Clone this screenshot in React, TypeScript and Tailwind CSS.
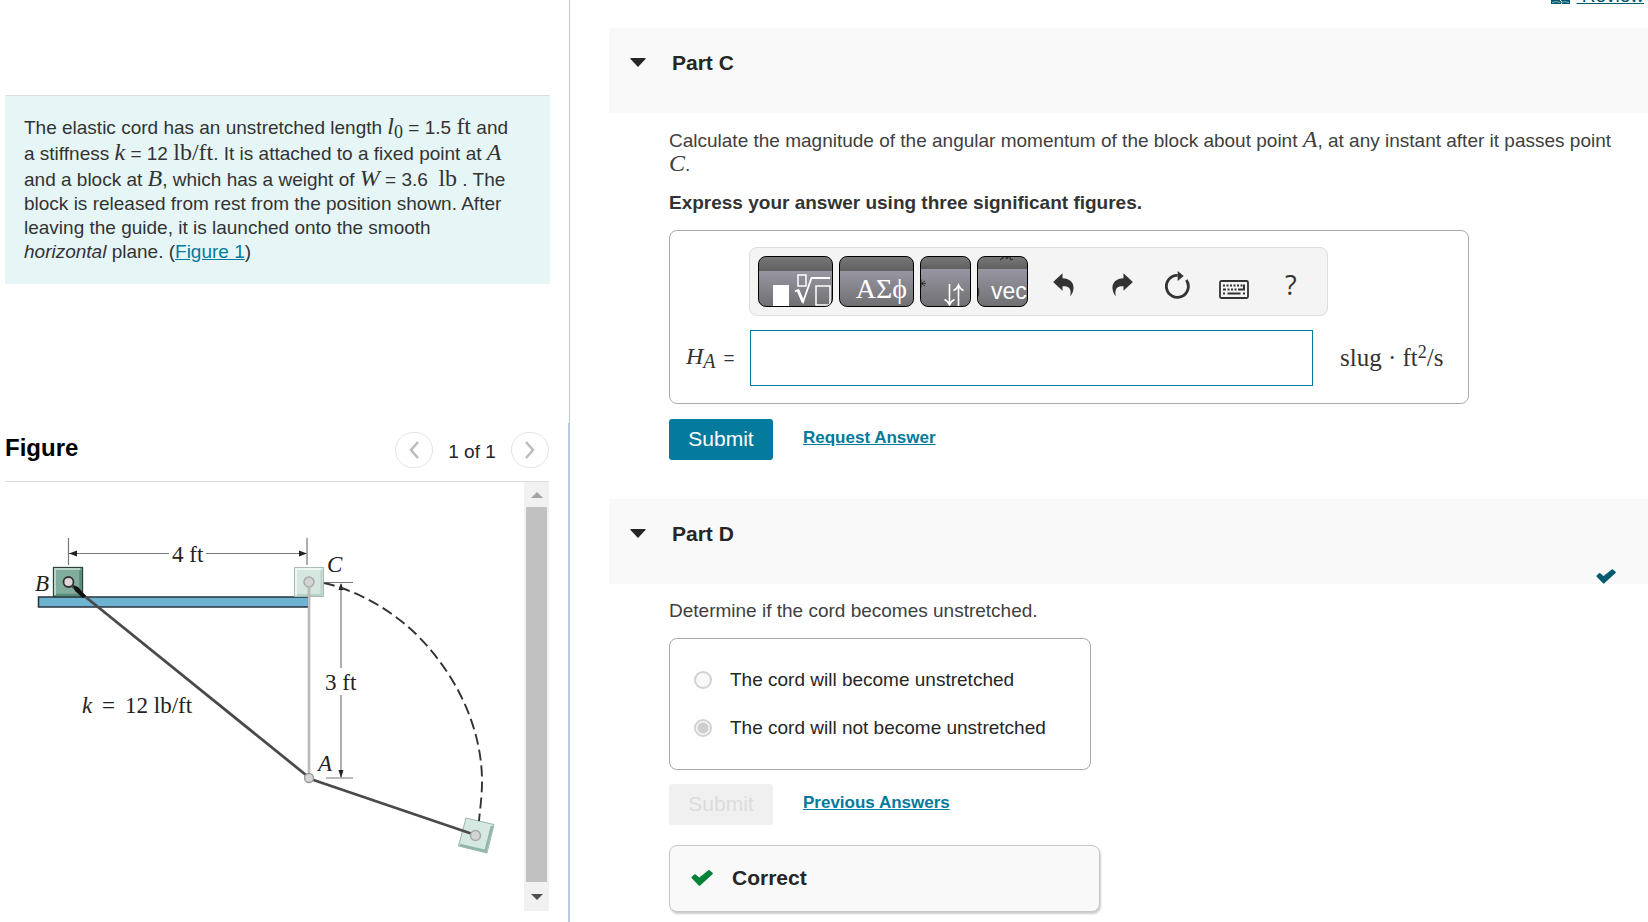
import type { ReactNode } from "react";

const M = ({ children }: { children: ReactNode }) => (
    <span className="font-['Liberation_Serif',serif] text-[24px] leading-5 italic">{children}</span>
);

const Unit = ({ children }: { children: ReactNode }) => (
    <span className="font-['Liberation_Serif',serif] text-[24px] leading-6">{children}</span>
);

const Check = ({ className }: { className: string }) => (
    <svg viewBox="0 0 22 16" className={className} fill="currentColor" stroke="currentColor" strokeWidth="2" strokeLinejoin="round" aria-hidden="true">
        <path d="M1.500 7.500 L4 5.200 L8.300 8.800 L18 1 L20.800 3.500 L8.500 14.800 Z" />
    </svg>
);

const UndoIcon = ({ className }: { className: string }) => (
    <svg viewBox="0 0 64 74" className={className} fill="currentColor" aria-hidden="true">
        <path d="M0 28 L29 1 V16 C50 17 64 28 63 47 C62 58 58 66 52 72 C55 63 55 54 50 47 C46 42 38 41 29 41 V55 Z" />
    </svg>
);

const PartHeader = ({ title, done }: { title: string; done?: boolean }) => (
    <header className="relative flex h-[85px] items-start bg-[#f9f9f9] pt-[21px] pl-[21px] text-[#262626]">
        <button type="button" aria-label={`Collapse ${title}`} className="mt-2 mr-[26px] cursor-pointer">
            <svg width="16" height="11" viewBox="0 0 16 11" fill="currentColor" aria-hidden="true">
                <path d="M1 1 H15 Q16 1 15.500 2 L8.500 9.500 Q8 10 7.500 9.500 L0.500 2 Q0 1 1 1 Z" />
            </svg>
        </button>
        <h2 className="text-[21px] leading-7 font-bold">{title}</h2>
        {done && <Check className="absolute right-8 bottom-0 h-[15px] w-5 text-[#005a70]" />}
    </header>
);

const Drawing = () => (
    <svg viewBox="5 482 519 429" className="w-full max-w-[519px] font-['Liberation_Serif',serif] text-[23px]" role="img" aria-label="Block and elastic cord">
        <g stroke="#777" strokeWidth="1.200" fill="none">
            <path d="M68.500 538 V565 M307 538 V565 M69 553.500 H169 M206 553.500 H306" />
            <path d="M326 582.500 H353 M326 778 H353 M341 584 V668 M341 695 V777" />
        </g>
        <g fill="#222">
            <path d="M69 553.500 L77 550.500 V556.500 Z M307 553.500 L299 550.500 V556.500 Z" />
            <path d="M341 583 L338.500 590 H343.500 Z M341 778 L338.500 770 H343.500 Z" />
        </g>
        <rect x="38.500" y="597" width="269.500" height="10" fill="#6fb3d2" />
        <path d="M308 597 H38.500 V607 H308" fill="none" stroke="#26333b" strokeWidth="1.500" />
        <rect x="53.500" y="567.500" width="29" height="29" fill="#80ad9c" stroke="#2b4039" strokeWidth="1.300" />
        <path d="M55 595 V569 H80" stroke="#b8d4c9" strokeWidth="2" fill="none" />
        <path d="M80.500 570 V595 H56" stroke="#5b8b7a" strokeWidth="2.500" fill="none" />
        <circle cx="68.500" cy="582" r="5" fill="#ddd6da" stroke="#333" strokeWidth="1.800" />
        <rect x="294.500" y="567.500" width="29" height="29" fill="#d5e7df" stroke="#aabdb4" />
        <path d="M296 595 V569 H321" stroke="#eef6f2" strokeWidth="2" fill="none" />
        <path d="M321.500 570 V595 H297" stroke="#b9d2c7" strokeWidth="2" fill="none" />
        <circle cx="309" cy="582" r="5" fill="#d4d4d4" stroke="#a9a9a9" strokeWidth="1.500" />
        <path d="M309 587 V774" stroke="#999" strokeWidth="2.500" />
        <path d="M309 587 V774" stroke="#ddd" strokeWidth="1" />
        <path d="M72 586 L306 775" stroke="#4a4a4a" strokeWidth="2.800" />
        <path d="M73 585 L78 587 L86 596 L83 598 L75 591 Z" fill="#111" />
        <path d="M466 818 L494 824.500 L487 853 L458.500 846 Z" fill="#d5e9e2" stroke="#9db5ab" />
        <path d="M492 826 L485.500 851 L460 845" fill="none" stroke="#8fb5a7" strokeWidth="2.500" />
        <path d="M312 779.500 L471 833.500" stroke="#4a4a4a" strokeWidth="2.800" />
        <circle cx="475.500" cy="835.500" r="5" fill="#d4d4d4" stroke="#a9a9a9" strokeWidth="1.500" />
        <circle cx="309" cy="778" r="4.500" fill="#d6d6d6" stroke="#999" strokeWidth="1.300" />
        <path d="M324 583 C356 590 390 609 416 634 C462 680 482 735 482 781 C482 797 480 809 479 821" fill="none" stroke="#333" strokeWidth="1.900" strokeDasharray="11 5" />
        <g fill="#222">
            <text x="172" y="562">4 ft</text>
            <text x="325" y="690">3 ft</text>
            <text x="35" y="591" fontStyle="italic">B</text>
            <text x="327" y="572" fontStyle="italic">C</text>
            <text x="318" y="771" fontStyle="italic">A</text>
            <text y="713"><tspan x="82" fontStyle="italic">k</tspan><tspan x="102">=</tspan><tspan x="125">12 lb/ft</tspan></text>
        </g>
    </svg>
);

const toolButton = "relative h-[51px] cursor-pointer overflow-hidden rounded-lg border border-black text-white";

const Toolbar = () => (
    <div className="flex h-[69px] w-fit items-start rounded-lg border border-[#ddd] bg-[#f4f4f4] pt-2 pr-[30px] pl-2 text-[#333]">
        <div className="flex gap-1.5">
            <button type="button" aria-label="Templates" className={`${toolButton} w-[75px] bg-[linear-gradient(#777,#606060_14px,#9896a1_14px,#707073)]`}>
                <svg width="73" height="49" viewBox="0 0 73 49" fill="none" stroke="#fff" aria-hidden="true">
                    <rect x="14" y="28" width="16" height="21" fill="#fff" stroke="none" />
                    <rect x="39" y="18" width="8" height="11" strokeWidth="1.500" />
                    <path d="M36 34.500 L39 33 L44 45 L52.500 21 H71" strokeWidth="1.800" />
                    <path d="M39 33 L44 45" strokeWidth="3" />
                    <rect x="57" y="29" width="14" height="19" strokeWidth="1.500" />
                </svg>
            </button>
            <button type="button" aria-label="Symbols" className={`${toolButton} w-[75px] bg-[linear-gradient(#777,#606060_14px,#9896a1_14px,#707073)] pt-3.5 pr-1.5 text-right font-['Liberation_Serif','DejaVu_Serif',serif] text-[28px] leading-9`}>
                ΑΣϕ
            </button>
            <button type="button" aria-label="Arrows" className={`${toolButton} w-[51px] bg-[linear-gradient(#777,#606060_12px,#9896a1_12px,#707073)]`}>
                <svg width="49" height="49" viewBox="0 0 49 49" fill="none" stroke="#fff" strokeWidth="1.600" aria-hidden="true">
                    <path d="M28.500 27 V48 M23.500 42.500 Q27 44 28.500 48 Q30 44 33.500 42.500" />
                    <path d="M37.500 49 V28 M32.500 33.500 Q36 32 37.500 28 Q39 32 42.500 33.500" />
                    <path d="M0 22 V31 M0 26.500 L4 24 M0 26.500 H5 M0 26.500 L4 29" stroke="#333" strokeWidth="1" />
                </svg>
            </button>
            <button type="button" className={`${toolButton} w-[51px] bg-[linear-gradient(#777,#606060_12px,#9896a1_12px,#707073)] pt-4 pl-[13px] text-left text-[23px] leading-9`}>
                vec
                <svg width="49" height="49" viewBox="0 0 49 49" fill="none" stroke="#333" strokeWidth="1.500" className="absolute top-0 left-0" aria-hidden="true">
                    <path d="M22 3 L26 0 M28 0 Q29 3 30 0 M32 0 Q32 4 35 2 M0 31 Q1 35 0 39" />
                </svg>
            </button>
        </div>
        <div className="mt-[17px] ml-[25px] flex items-start">
            <button type="button" aria-label="Undo" className="mr-[38px] cursor-pointer"><UndoIcon className="h-6 w-[21px]" /></button>
            <button type="button" aria-label="Redo" className="mr-8 cursor-pointer"><UndoIcon className="h-6 w-[21px] -scale-x-100" /></button>
            <button type="button" aria-label="Reset" className="mr-[29px] -mt-0.5 cursor-pointer">
                <svg width="25" height="28" viewBox="0 0 75 84" fill="none" aria-hidden="true">
                    <path d="M64 27 A33 33 0 1 1 38 13" stroke="#333" strokeWidth="8.500" />
                    <path d="M38 0 L56 15 L38 30 Z" fill="#333" />
                </svg>
            </button>
            <button type="button" aria-label="Keyboard shortcuts" className="mt-[7px] mr-9 cursor-pointer">
                <svg width="30" height="19" viewBox="0 0 30 19" fill="none" stroke="#333" aria-hidden="true">
                    <rect x="1" y="1" width="28" height="17" rx="1.500" strokeWidth="1.800" />
                    <path d="M4 5.500 H24" strokeWidth="2" strokeDasharray="2 1.500" />
                    <path d="M4 9.500 H23" strokeWidth="2" strokeDasharray="3 1.500 2 1.500 2 1.500 2 1.500" />
                    <path d="M4 13.500 H6 M8.500 13.500 H21.500 M24 13.500 H26 M25 4.500 V9.500 H22" strokeWidth="2" />
                </svg>
            </button>
            <button type="button" aria-label="Help" className="cursor-pointer font-['Open_Sans',sans-serif] text-[27px] leading-6">?</button>
        </div>
    </div>
);

const Problem = () => (
    <section className="border-r border-[#b8cbe0] pt-[95px] pr-[19px] pb-[139px] pl-[5px]">
        <div className="border-t border-[#ddd] bg-[#e6f6f7] pt-[18px] pr-9 pb-5 pl-[19px] text-[19px] leading-6 text-[#333]">
            <p>
                The elastic cord has an unstretched length <M>l</M><sub className="relative top-1 font-['Liberation_Serif',serif] text-[18px] leading-none align-baseline">0</sub> = 1.5 <Unit>ft</Unit> and
                a stiffness <M>k</M> = 12 <Unit>lb/ft</Unit>. It is attached to a fixed point at <M>A</M> and a block
                at <M>B</M>, which has a weight of <M>W</M>&nbsp;= 3.6 &nbsp;<Unit>lb</Unit> . The block is released from
                rest from the position shown. After leaving the guide, it is launched onto the
                smooth <em>horizontal</em> plane. (<a href="#figure" className="text-[#047a9c] underline">Figure 1</a>)
            </p>
        </div>
    </section>
);

const pager = "flex h-9 w-[38px] items-center justify-center rounded-full border border-[#e4e4e4] text-[#bbb]";

const Figure = () => (
    <section id="figure" className="flex flex-1 flex-col border-r-2 border-[#b8cbe0] pr-[19px] pb-[11px] pl-[5px]">
        <div className="flex items-start justify-between border-b border-[#ddd] pt-[9px] pb-[13px]">
            <h2 className="text-[24px] leading-8 font-bold text-black">Figure</h2>
            <div className="flex items-center text-[19px] text-[#262626]">
                <button type="button" aria-label="Previous figure" className={pager}>
                    <svg width="10" height="18" viewBox="0 0 10 18" fill="none" stroke="currentColor" strokeWidth="2.500"><path d="M9 1 L2 9 L9 17" /></svg>
                </button>
                <span className="mt-1 w-[78px] text-center leading-6">1 of 1</span>
                <button type="button" aria-label="Next figure" className={pager}>
                    <svg width="10" height="18" viewBox="0 0 10 18" fill="none" stroke="currentColor" strokeWidth="2.500"><path d="M1 1 L8 9 L1 17" /></svg>
                </button>
            </div>
        </div>
        <div className="flex flex-1 items-stretch">
            <div className="min-w-0 flex-1"><Drawing /></div>
            <div className="flex w-[25px] flex-col items-center bg-[#f1f1f1]">
                <button type="button" aria-label="Scroll up" className="flex h-[25px] w-full items-center justify-center text-[#a3a3a3]">
                    <svg width="12" height="6" viewBox="0 0 12 6" fill="currentColor"><path d="M0 6 L6 0 L12 6 Z" /></svg>
                </button>
                <div className="w-[21px] flex-1 bg-[#c1c1c1]" />
                <button type="button" aria-label="Scroll down" className="flex h-[29px] w-full items-center justify-center text-[#505050]">
                    <svg width="12" height="6" viewBox="0 0 12 6" fill="currentColor"><path d="M0 0 L6 6 L12 0 Z" /></svg>
                </button>
            </div>
        </div>
    </section>
);

const PartC = () => (
    <section>
        <PartHeader title="Part C" />
        <div className="pr-4 pl-[60px]">
            <p className="mt-4 text-[19px] leading-6 text-[#404040]">
                Calculate the magnitude of the angular momentum of the block about point <M>A</M>, at any instant after it passes point <M>C</M>.
            </p>
            <p className="mt-3.5 text-[19px] leading-6 font-bold text-[#333]">Express your answer using three significant figures.</p>
            <form>
                <div className="mt-[15px] max-w-[800px] rounded-lg border border-[#aaa] px-4 pt-4 pb-[17px]">
                    <div className="pl-[63px]"><Toolbar /></div>
                    <div className="mt-3.5 flex items-center text-[19px] text-[#333]">
                        <label htmlFor="answer" className="w-16 whitespace-nowrap">
                            <M>H</M><sub className="relative top-1 font-['Liberation_Serif',serif] text-[20px] leading-none italic align-baseline">A</sub>
                            <span className="ml-2">=</span>
                        </label>
                        <input id="answer" type="text" className="h-14 min-w-0 flex-1 border border-[#047a9c] bg-white px-3 outline-none" />
                        <span className="ml-[27px] w-28 font-['Liberation_Serif',serif] text-[25px] leading-8 whitespace-nowrap">
                            slug · ft<sup className="relative -top-2 text-[18px] leading-none align-baseline">2</sup>/s
                        </span>
                    </div>
                </div>
                <div className="mt-[15px] flex items-center gap-[30px]">
                    <button type="submit" className="h-[41px] w-[104px] cursor-pointer rounded-[3px] bg-[#047a9c] pb-0.5 text-[21px] text-white">Submit</button>
                    <a href="#request" className="pb-1 text-[17px] leading-6 font-bold text-[#047a9c] underline">Request Answer</a>
                </div>
            </form>
        </div>
    </section>
);

const radio = "h-[18px] w-[18px] appearance-none rounded-full border-2 border-[#d1d1d1] bg-[#f8f8f8] checked:border-[#d1d1d1] checked:bg-[radial-gradient(circle,#cecece_5px,#f8f8f8_6px)]";

const PartD = () => (
    <section className="mt-[39px]">
        <PartHeader title="Part D" done />
        <div className="pr-4 pl-[60px]">
            <p className="mt-[15px] text-[19px] leading-6 text-[#404040]">Determine if the cord becomes unstretched.</p>
            <form>
                <div className="mt-[15px] flex max-w-[422px] flex-col gap-6 rounded-lg border border-[#aaa] px-6 py-[29px] text-[19px] leading-6 text-[#262626]">
                    <label className="flex items-center gap-[18px]">
                        <input type="radio" name="cord" disabled className={radio} />
                        The cord will become unstretched
                    </label>
                    <label className="flex items-center gap-[18px]">
                        <input type="radio" name="cord" defaultChecked disabled className={radio} />
                        The cord will not become unstretched
                    </label>
                </div>
                <div className="mt-3.5 flex items-center gap-[30px]">
                    <button type="submit" disabled className="h-[41px] w-[104px] rounded-[3px] bg-[#f0f0f0] pb-0.5 text-[21px] text-[#dcdcdc]">Submit</button>
                    <a href="#previous" className="pb-1 text-[17px] leading-6 font-bold text-[#047a9c] underline">Previous Answers</a>
                </div>
            </form>
            <div className="mt-5 flex h-[67px] max-w-[431px] items-center rounded-lg border border-[#c7c7c7] bg-[#f9f9f9] pb-0.5 pl-[21px] text-[21px] font-bold text-[#262626] shadow-[1px_2px_2px_rgba(0,0,0,0.2)]">
                <Check className="mr-[19px] h-4 w-[22px] text-[#038238]" />
                Correct
            </div>
        </div>
    </section>
);

export default function App() {
    return (
        <div className="flex min-h-screen bg-white font-['Liberation_Sans',Arial,sans-serif]">
            <aside className="flex w-[570px] shrink-0 flex-col">
                <Problem />
                <Figure />
            </aside>
            <main className="min-w-0 flex-1 overflow-hidden pl-[39px]">
                <div className="flex h-7 items-start justify-end gap-1.5 pr-1 text-[#005a70]">
                    <svg width="19" height="16" viewBox="0 0 19 16" className="-mt-3" fill="currentColor" aria-hidden="true">
                        <path d="M0 1 Q5 -1 9 2 V16 H0 Z M19 1 Q14 -1 10 2 V16 H19 Z M8 13 H11 V16 H8 Z" />
                        <path d="M1 14.500 Q6 12.500 9 14.500 M18 14.500 Q13 12.500 10 14.500" stroke="#8fb6c0" fill="none" />
                    </svg>
                    <a href="#review" className="-mt-4 text-[19px] leading-6 underline">&nbsp;Review</a>
                </div>
                <PartC />
                <PartD />
            </main>
        </div>
    );
}
